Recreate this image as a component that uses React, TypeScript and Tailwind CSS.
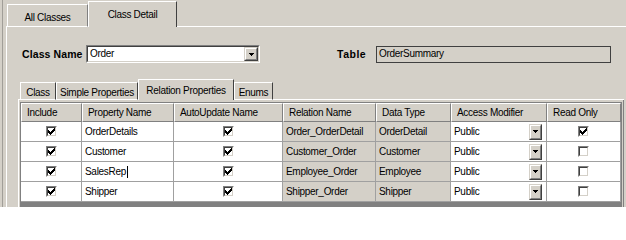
import React from "react";

type Row = {
  name: string;
  relation: string;
  dataType: string;
  readOnly: boolean;
  caret?: boolean;
};

const rows: Row[] = [
  { name: "OrderDetails", relation: "Order_OrderDetail", dataType: "OrderDetail", readOnly: true },
  { name: "Customer", relation: "Customer_Order", dataType: "Customer", readOnly: false },
  { name: "SalesRep", relation: "Employee_Order", dataType: "Employee", readOnly: false, caret: true },
  { name: "Shipper", relation: "Shipper_Order", dataType: "Shipper", readOnly: false },
];

const headers = [
  "Include",
  "Property Name",
  "AutoUpdate Name",
  "Relation Name",
  "Data Type",
  "Access Modifier",
  "Read Only",
];

function Check({ checked }: { checked: boolean }) {
  return (
    <div className="w-[11px] h-[11px] border-t border-l border-t-[#808080] border-l-[#808080] border-b border-r border-b-white border-r-white">
      <div className="w-full h-full border-t border-l border-t-[#404040] border-l-[#404040] border-b border-r border-b-[#d4d0c8] border-r-[#d4d0c8] bg-white flex items-center justify-center">
        {checked && (
          <svg width="7" height="7" viewBox="0 0 7 7" shapeRendering="crispEdges">
            <path
              d="M6 0h1v3h-1v1h-1v1h-1v1h-1v1h-1v-1h-1v-1h-1v-3h1v1h1v1h1v-1h1v-1h1z"
              fill="#000"
            />
          </svg>
        )}
      </div>
    </div>
  );
}

function DropButton({ className = "" }: { className?: string }) {
  return (
    <div
      className={`border-t border-l border-t-[#d4d0c8] border-l-[#d4d0c8] border-b border-r border-b-[#404040] border-r-[#404040] ${className}`}
    >
      <div className="w-full h-full bg-[#d4d0c8] border-t border-l border-t-white border-l-white border-b border-r border-b-[#808080] border-r-[#808080] flex items-center justify-center">
        <svg width="5" height="3" viewBox="0 0 5 3" shapeRendering="crispEdges">
          <path d="M0 0h5v1h-1v1h-1v1h-1v-1h-1v-1h-1z" fill="#000" />
        </svg>
      </div>
    </div>
  );
}

export default function App() {
  return (
    <div className="w-[626px] h-[207px] overflow-hidden bg-[#d4d0c8] text-black flex font-['Liberation_Sans',Arial,sans-serif] text-[10px] tracking-[-0.3px] leading-none">
      {/* window edge */}
      <div className="ml-[2px] w-px bg-[#a19e98]" />

      <div className="flex-1 pl-[3px] flex flex-col">
        {/* outer tabs */}
        <div className="h-[27px] flex items-end shrink-0">
          <div className="w-px h-[23px] border-b border-white" />
          <div className="w-[81px] h-[23px] border-t border-l border-white border-r border-r-[#808080] border-b border-b-white flex justify-center pt-[8px]">
            All Classes
          </div>
          <div className="w-[89px] h-[26px] border-t border-l border-white border-r border-r-[#404040] flex justify-center pt-[8px]">
            Class Detail
          </div>
          <div className="flex-1 h-px bg-white" />
        </div>

        {/* page */}
        <div className="flex-1 border-l border-white flex flex-col pl-[11px] pt-[18px]">
          {/* class name / table row */}
          <div className="flex items-center h-[18px] pl-[4px]">
            <div className="w-[64px] font-bold text-[10.5px] tracking-[0.1px]">Class Name</div>
            <div className="w-[174px] h-[18px] border-t border-l border-t-[#808080] border-l-[#808080] border-b border-r border-b-white border-r-white">
              <div className="w-full h-full border-t border-l border-t-[#404040] border-l-[#404040] border-b border-r border-b-[#d4d0c8] border-r-[#d4d0c8] bg-white flex items-center">
                <span className="flex-1 pl-[2px]">Order</span>
                <DropButton className="w-[14px] h-[14px]" />
              </div>
            </div>
            <div className="ml-[77px] w-[39px] font-bold text-[10.5px] tracking-[0.5px]">Table</div>
            <div className="w-[235px] h-[17px] border border-[#404040] flex items-center pl-[2px]">
              OrderSummary
            </div>
          </div>

          {/* inner tabs */}
          <div className="mt-[16px] h-[21px] flex items-end">
            <div className="w-[2px] h-px bg-white" />
            <div className="w-[36px] h-[18px] border-t border-l border-white border-r border-r-[#404040] border-b border-b-white flex justify-center pt-[5px]">
              Class
            </div>
            <div className="w-[82px] h-[18px] border-t border-l border-white border-r border-r-[#404040] border-b border-b-white flex justify-center pt-[5px]">
              Simple Properties
            </div>
            <div className="w-[96px] h-[21px] border-t border-l border-white border-r border-r-[#404040] flex justify-center pt-[6px]">
              Relation Properties
            </div>
            <div className="w-[39px] h-[18px] border-t border-l border-white border-r border-r-[#404040] border-b border-b-white flex justify-center pt-[5px]">
              Enums
            </div>
            <div className="flex-1 h-px bg-white" />
            <div className="w-[2px]" />
          </div>

          {/* tab page */}
          <div className="flex-1 mr-[2px] border-l border-white border-r border-r-[#808080] pl-px pt-[2px] pr-px">
            <div className="h-full border-t border-l border-[#808080] bg-[#808080]">
              <div className="grid grid-cols-[61px_92px_109px_93px_75px_96px_74px]">
                {headers.map((h) => (
                  <div
                    key={h}
                    className="h-[19px] bg-[#d4d0c8] border-t border-l border-white border-r border-b border-r-[#808080] border-b-[#808080] flex items-center pl-[5px]"
                  >
                    {h}
                  </div>
                ))}
                {rows.map((r) => (
                  <React.Fragment key={r.name}>
                    <div className="h-[20px] bg-white border-r border-b border-[#a0a0a0] flex items-center justify-center">
                      <Check checked />
                    </div>
                    <div className="h-[20px] bg-white border-r border-b border-[#a0a0a0] flex items-center pl-[3px]">
                      {r.name}
                      {r.caret && <span className="ml-px w-px h-[12px] bg-black" />}
                    </div>
                    <div className="h-[20px] bg-white border-r border-b border-[#a0a0a0] flex items-center justify-center">
                      <Check checked />
                    </div>
                    <div className="h-[20px] bg-[#d4d0c8] border-r border-b border-[#a0a0a0] flex items-center pl-[3px] overflow-hidden whitespace-nowrap">
                      {r.relation}
                    </div>
                    <div className="h-[20px] bg-[#d4d0c8] border-r border-b border-[#a0a0a0] flex items-center pl-[3px]">
                      {r.dataType}
                    </div>
                    <div className="h-[20px] bg-white border-r border-b border-[#a0a0a0] flex items-center pl-[3px] pr-[4px]">
                      <span className="flex-1">Public</span>
                      <DropButton className="w-[13px] h-[16px]" />
                    </div>
                    <div className="h-[20px] bg-white border-r border-b border-[#a0a0a0] flex items-center justify-center">
                      <Check checked={r.readOnly} />
                    </div>
                  </React.Fragment>
                ))}
              </div>
            </div>
          </div>
        </div>
      </div>
    </div>
  );
}
